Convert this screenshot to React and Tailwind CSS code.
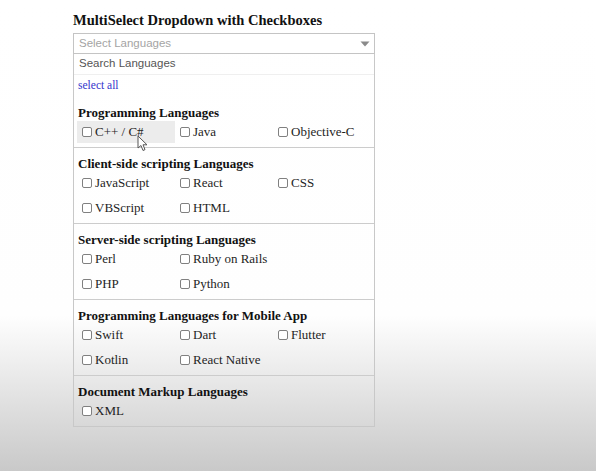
import React from "react";

const groups = [
  { title: "Programming Languages", rows: [["C++ / C#", "Java", "Objective-C"]] },
  { title: "Client-side scripting Languages", rows: [["JavaScript", "React", "CSS"], ["VBScript", "HTML"]] },
  { title: "Server-side scripting Languages", rows: [["Perl", "Ruby on Rails"], ["PHP", "Python"]] },
  { title: "Programming Languages for Mobile App", rows: [["Swift", "Dart", "Flutter"], ["Kotlin", "React Native"]] },
  { title: "Document Markup Languages", rows: [["XML"]] },
];

function Option({ label, hover }) {
  return (
    <div className={"w-[98px] h-[22px] flex items-center pl-[5px] gap-[3px] " + (hover ? "bg-[#ececec]" : "")}>
      <span className="w-[10px] h-[10px] border border-[#808080] rounded-[2px] bg-white shrink-0"></span>
      <span className="text-[13px] leading-[16px] text-[#1e1e1e]">{label}</span>
    </div>
  );
}

export default function App() {
  return (
    <div className="relative w-[596px] h-[471px] overflow-hidden bg-[linear-gradient(to_bottom,#ffffff_0%,#fefefe_67%,#f0f0f0_76%,#dcdcdc_88%,#c9c9c9_100%)] font-['Liberation_Serif',serif]">
      <div className="pl-[73px] pt-[11px]">
        <h1 className="font-bold text-[14.5px] leading-[18px] text-[#111]">MultiSelect Dropdown with Checkboxes</h1>
        <div className="mt-[4px] w-[302px]">
          <div className="h-[21px] border border-[#c4c4c4] flex items-center justify-between pl-[5px] pr-[4px] bg-white">
            <span className="font-['Liberation_Sans',sans-serif] text-[11.5px] text-[#a4a4a4]">Select Languages</span>
            <svg width="10" height="6" viewBox="0 0 10 6"><path d="M0.5 0.5 L9.5 0.5 L5 5.5 Z" fill="#8a8a8a" /></svg>
          </div>
          <div className="border-x border-b border-[#c8c8c8]">
            <div className="h-[21px] flex items-center pl-[5px] border-b border-[#efefef] font-['Liberation_Sans',sans-serif] text-[11.5px] text-[#555]">
              Search Languages
            </div>
            <div className="pl-[4px] pt-[2px] pb-[4px] text-[11.5px] leading-[16px] text-[#3535cc]">select all</div>
            {groups.map((g, gi) => (
              <div key={g.title} className={"pt-[8px] pb-[4px] " + (gi > 0 ? "border-t border-[#cccccc]" : "")}>
                <div className="pl-[4px] font-bold text-[13px] leading-[16px] text-[#111]">{g.title}</div>
                <div className="flex flex-col gap-y-[3px] px-[3px]">
                  {g.rows.map((row, ri) => (
                    <div key={ri} className="flex">
                      {row.map((it) => (
                        <Option key={it} label={it} hover={it === "C++ / C#"} />
                      ))}
                    </div>
                  ))}
                </div>
              </div>
            ))}
          </div>
        </div>
      </div>
      <svg className="absolute left-[137px] top-[135px] pointer-events-none" width="11" height="17" viewBox="0 0 11 17">
        <path d="M1 1 L1 13 L4 10.5 L6 15.5 L8 14.6 L6 9.8 L10 9.8 Z" fill="#ffffff" stroke="#555" strokeWidth="1" strokeLinejoin="round" />
      </svg>
    </div>
  );
}
